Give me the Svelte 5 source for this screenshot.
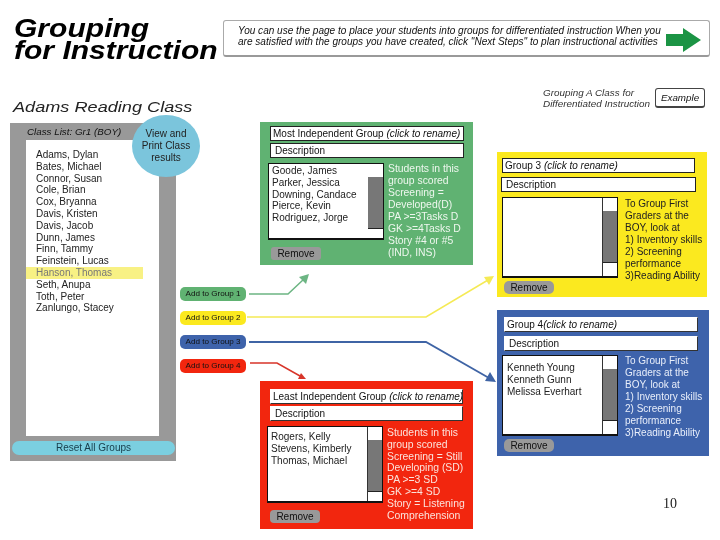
<script>
  const students = ['Adams, Dylan', 'Bates, Michael', 'Connor, Susan', 'Cole, Brian', 'Cox, Bryanna', 'Davis, Kristen', 'Davis, Jacob', 'Dunn, James', 'Finn, Tammy', 'Feinstein, Lucas', 'Hanson, Thomas', 'Seth, Anupa', 'Toth, Peter', 'Zanlungo, Stacey'];

  const firstGraders = ['To Group First', 'Graders at the', 'BOY, look at', '1) Inventory skills', '2) Screening', 'performance', '3)Reading Ability'];

  const groups = [
    {
      color: 'green', name: 'Most Independent Group ', hint: '(click to rename)',
      members: ['Goode, James', 'Parker, Jessica', 'Downing, Candace', 'Pierce, Kevin', 'Rodriguez, Jorge'],
      notes: ['Students in this', 'group scored', 'Screening =', 'Developed(D)', 'PA >=3Tasks D', 'GK >=4Tasks D', 'Story #4 or #5', '(IND, INS)']
    },
    { color: 'yellow', name: 'Group 3 ', hint: '(click to rename)', members: [], notes: firstGraders },
    { color: 'blue', name: 'Group 4', hint: '(click to rename)', members: ['Kenneth Young', 'Kenneth Gunn', 'Melissa Everhart'], notes: firstGraders },
    {
      color: 'red', name: 'Least Independent Group ', hint: '(click to rename)',
      members: ['Rogers, Kelly', 'Stevens, Kimberly', 'Thomas, Michael'],
      notes: ['Students in this', 'group scored', 'Screening = Still', 'Developing (SD)', 'PA >=3 SD', 'GK >=4 SD', 'Story = Listening', 'Comprehension']
    }
  ];

  const addButtons = [
    { label: 'Add to Group 1', color: 'green' },
    { label: 'Add to Group 2', color: 'yellow' },
    { label: 'Add to Group 3', color: 'blue' },
    { label: 'Add to Group 4', color: 'red' }
  ];

  const arrows = [
    { points: '249,294 288,294 304,279', tip: '309,274 306,284 299,277', stroke: '#6cb583', width: 1.5 },
    { points: '247,317 426,317 488,280', tip: '494,276 489,285 484,277', stroke: '#f5ea55', width: 1.5 },
    { points: '249,342 426,342 489,378', tip: '496,382 485,381 490,372', stroke: '#3f64a5', width: 1.8 },
    { points: '250,363 277,363 300,376', tip: '306,379 298,379 301,373', stroke: '#d8352a', width: 1.5 }
  ];
</script>

<div class="slide">
  <header class="top">
    <h1><span>Grouping</span><span>for Instruction</span></h1>
    <div class="intro">
      <p>You can use the page to place your students into groups for differentiated instruction When you<br />are satisfied with the groups you have created, click "Next Steps" to plan instructional activities</p>
      <svg class="next" viewBox="0 0 35 24" width="35" height="24">
        <polygon points="0,6 17,6 17,0 35,12 17,24 17,18 0,18" fill="#1b9444" />
      </svg>
    </div>
  </header>

  <h2>Adams Reading Class</h2>

  <div class="example">
    <span>Grouping A Class for<br />Differentiated Instruction</span>
    <button>Example</button>
  </div>

  <section class="roster">
    <div class="roster-title">Class List: Gr1 (BOY)</div>
    <ul>
      {#each students as s}
        <li class:picked={s === 'Hanson, Thomas'}>{s}</li>
      {/each}
    </ul>
    <button class="reset">Reset All Groups</button>
  </section>

  <button class="bubble">View and<br />Print Class<br />results</button>

  <div class="adds">
    {#each addButtons as b}
      <button class="add {b.color}">{b.label}</button>
    {/each}
  </div>

  <svg class="links" viewBox="0 0 720 540" width="720" height="540">
    {#each arrows as a}
      <polyline points={a.points} fill="none" stroke={a.stroke} stroke-width={a.width} />
      <polygon points={a.tip} fill={a.stroke} />
    {/each}
  </svg>

  {#each groups as g}
    <section class="group {g.color}">
      <div class="field name">{g.name}<em>{g.hint}</em></div>
      <div class="field desc">Description</div>
      <div class="body">
        <div class="left">
          <div class="members">
            <ul>
              {#each g.members as m}
                <li>{m}</li>
              {/each}
            </ul>
            <div class="scroll"><div class="thumb"></div></div>
          </div>
          <button class="remove">Remove</button>
        </div>
        <div class="notes">
          {#each g.notes as n}
            <div>{n}</div>
          {/each}
        </div>
      </div>
    </section>
  {/each}

  <div class="page-no">10</div>
</div>

<style>
  :global(body) {
    margin: 0;
    background: #fff;
  }

  /* the reference is a soft, low-res capture of a slide */
  .slide {
    position: relative;
    width: 720px;
    height: 540px;
    overflow: hidden;
    background: #fff;
    color: #111;
    font-family: "Liberation Sans", Arial, sans-serif;
    filter: blur(0.35px);
  }

  button {
    font-family: inherit;
    padding: 0;
    border: none;
    color: #111;
  }

  ul {
    list-style: none;
    margin: 0;
    padding: 0;
  }

  .top {
    display: flex;
    align-items: flex-start;
    gap: 6px;
    padding: 16px 10px 0 14px;
  }

  /* stretched sideways like the original slide */
  h1 {
    flex: none;
    margin: 1px 0 0;
    width: 203px;
    font-size: 26.5px;
    line-height: 22px;
    font-weight: bold;
    font-style: italic;
    white-space: nowrap;
    color: #000;
    transform: scaleX(1.134);
    transform-origin: left top;
  }

  h1 span {
    display: block;
    height: 22px;
  }

  .intro {
    flex: 1;
    box-sizing: border-box;
    height: 37px;
    margin-top: 4px;
    display: flex;
    align-items: center;
    justify-content: space-between;
    padding: 0 8px 0 14px;
    border: 1px solid #aaa;
    border-bottom: 2px solid #999;
    border-radius: 3px;
  }

  .intro p {
    margin: -3px 0 0;
    font-size: 10.05px;
    line-height: 10.5px;
    font-style: italic;
    white-space: nowrap;
  }

  .next {
    flex: none;
    margin-top: 4px;
  }

  h2 {
    position: absolute;
    left: 13px;
    top: 98px;
    margin: 0;
    font-size: 15.5px;
    line-height: 18px;
    font-weight: normal;
    font-style: italic;
    color: #222;
    white-space: nowrap;
    transform: scaleX(1.17);
    transform-origin: left top;
  }

  .example {
    position: absolute;
    left: 543px;
    top: 87px;
    display: flex;
    align-items: center;
    gap: 5px;
    font-size: 9.9px;
    line-height: 11px;
    font-style: italic;
    white-space: nowrap;
    color: #333;
  }

  .example button {
    width: 50px;
    height: 20px;
    background: #fff;
    border: 1px solid #444;
    border-bottom-width: 2px;
    border-radius: 3px;
    font-size: 9.8px;
    font-style: italic;
  }

  .roster {
    position: absolute;
    left: 10px;
    top: 123px;
    width: 166px;
    height: 338px;
    box-sizing: border-box;
    padding-top: 17px;
    background: #999;
  }

  .roster-title {
    position: absolute;
    left: 17px;
    top: 3px;
    font-size: 9.8px;
    line-height: 12px;
    font-style: italic;
  }

  .roster ul {
    margin-left: 16px;
    width: 133px;
    height: 296px;
    box-sizing: border-box;
    padding-top: 9px;
    background: #fff;
  }

  .roster li {
    padding-left: 10px;
    font-size: 10px;
    line-height: 11.8px;
    color: #222;
  }

  .roster li.picked {
    width: 107px;
    background: #f8f184;
    color: #777;
  }

  .reset {
    display: block;
    width: 163px;
    height: 14px;
    margin: 5px 0 0 2px;
    border-radius: 7px;
    background: #7bcfe0;
    font-size: 10px;
    line-height: 14px;
    color: #173c4a;
  }

  .bubble {
    position: absolute;
    left: 132px;
    top: 115px;
    width: 68px;
    height: 62px;
    border-radius: 50%;
    background: #7bc5dc;
    font-size: 10px;
    line-height: 12px;
    color: #222;
  }

  .adds {
    position: absolute;
    left: 180px;
    top: 287px;
    display: flex;
    flex-direction: column;
    gap: 10px;
  }

  .add {
    display: block;
    width: 66px;
    height: 14px;
    border-radius: 5px;
    font-size: 8.1px;
    line-height: 14px;
  }

  .links {
    position: absolute;
    left: 0;
    top: 0;
  }

  .add.green, .group.green { background: #60b272; }
  .add.yellow, .group.yellow { background: #fbe91f; }
  .add.blue, .group.blue { background: #3e63ab; }
  .add.red, .group.red { background: #f2260e; }

  .group {
    position: absolute;
    box-sizing: border-box;
  }

  .group.green { left: 260px; top: 122px; width: 213px; height: 143px; padding: 4px 9px 0 10px; }
  .group.yellow { left: 497px; top: 152px; width: 210px; height: 145px; padding: 6px 12px 0 5px; }
  .group.blue { left: 497px; top: 310px; width: 212px; height: 146px; padding: 7px 11px 0 7px; }
  .group.red { left: 260px; top: 381px; width: 213px; height: 148px; padding: 8px 10px 0 10px; }

  .field {
    box-sizing: border-box;
    height: 15px;
    margin-bottom: 2px;
    padding-left: 2px;
    background: #fff;
    border: 1px solid #222;
    font-size: 10px;
    line-height: 13px;
    white-space: nowrap;
    overflow: hidden;
  }

  .group.blue .field,
  .group.red .field {
    border-color: #fff #333 #333 #fff;
  }

  .group.yellow .name { margin-bottom: 4px; }
  .group.yellow .desc { margin-left: -1px; margin-right: -1px; }
  .group.blue .name { margin-bottom: 4px; }

  .desc {
    padding-left: 4px;
  }

  .body {
    display: flex;
    align-items: flex-start;
    margin-top: 5px;
    margin-left: -2px;
    gap: 4px;
  }

  .group.yellow .body { margin-left: 0; gap: 7px; }
  .group.blue .body { margin-left: -2px; gap: 7px; margin-top: 4px; }
  .group.red .body { margin-left: -3px; gap: 4px; }

  .left {
    flex: none;
    width: 116px;
  }

  .members {
    display: flex;
    height: 77px;
    box-sizing: border-box;
    background: #fff;
    border: 1px solid #111;
    border-bottom-width: 2px;
  }

  .group.yellow .members,
  .group.blue .members { height: 81px; }

  .members ul {
    flex: 1;
    padding: 4px 0 0 3px;
    font-size: 10px;
    line-height: 11.8px;
    color: #222;
    white-space: nowrap;
  }

  .group.green .members ul { padding-top: 1px; }
  .group.blue .members ul { padding: 6px 0 0 4px; }

  .scroll {
    flex: none;
    width: 15px;
    box-sizing: border-box;
    padding-top: 13px;
  }

  .group.yellow .scroll,
  .group.blue .scroll,
  .group.red .scroll {
    border-left: 1px solid #333;
  }

  .thumb {
    height: 51px;
    background: #777;
    border-bottom: 1px solid #222;
  }

  .notes {
    font-size: 10.4px;
    line-height: 12px;
    white-space: nowrap;
    color: #eef7ee;
  }

  .group.yellow .notes { color: #222; font-size: 10px; margin-top: 1px; }
  .group.blue .notes { color: #e8eefa; font-size: 10px; }
  .group.red .notes { color: #fbe3dc; line-height: 11.8px; margin-top: 1px; }

  .remove {
    display: block;
    width: 50px;
    height: 13px;
    margin-top: 7px;
    margin-left: 3px;
    background: #999;
    border-radius: 3px;
    font-size: 10px;
    line-height: 13px;
  }

  .group.yellow .remove { margin-top: 3px; border-radius: 5px; margin-left: 2px; }
  .group.blue .remove { margin-top: 3px; border-radius: 5px; margin-left: 2px; }
  .group.red .remove { border-radius: 4px; }

  .page-no {
    position: absolute;
    left: 663px;
    top: 496px;
    font-family: "Liberation Serif", "Times New Roman", serif;
    font-size: 14px;
    line-height: 16px;
    color: #222;
  }
</style>
